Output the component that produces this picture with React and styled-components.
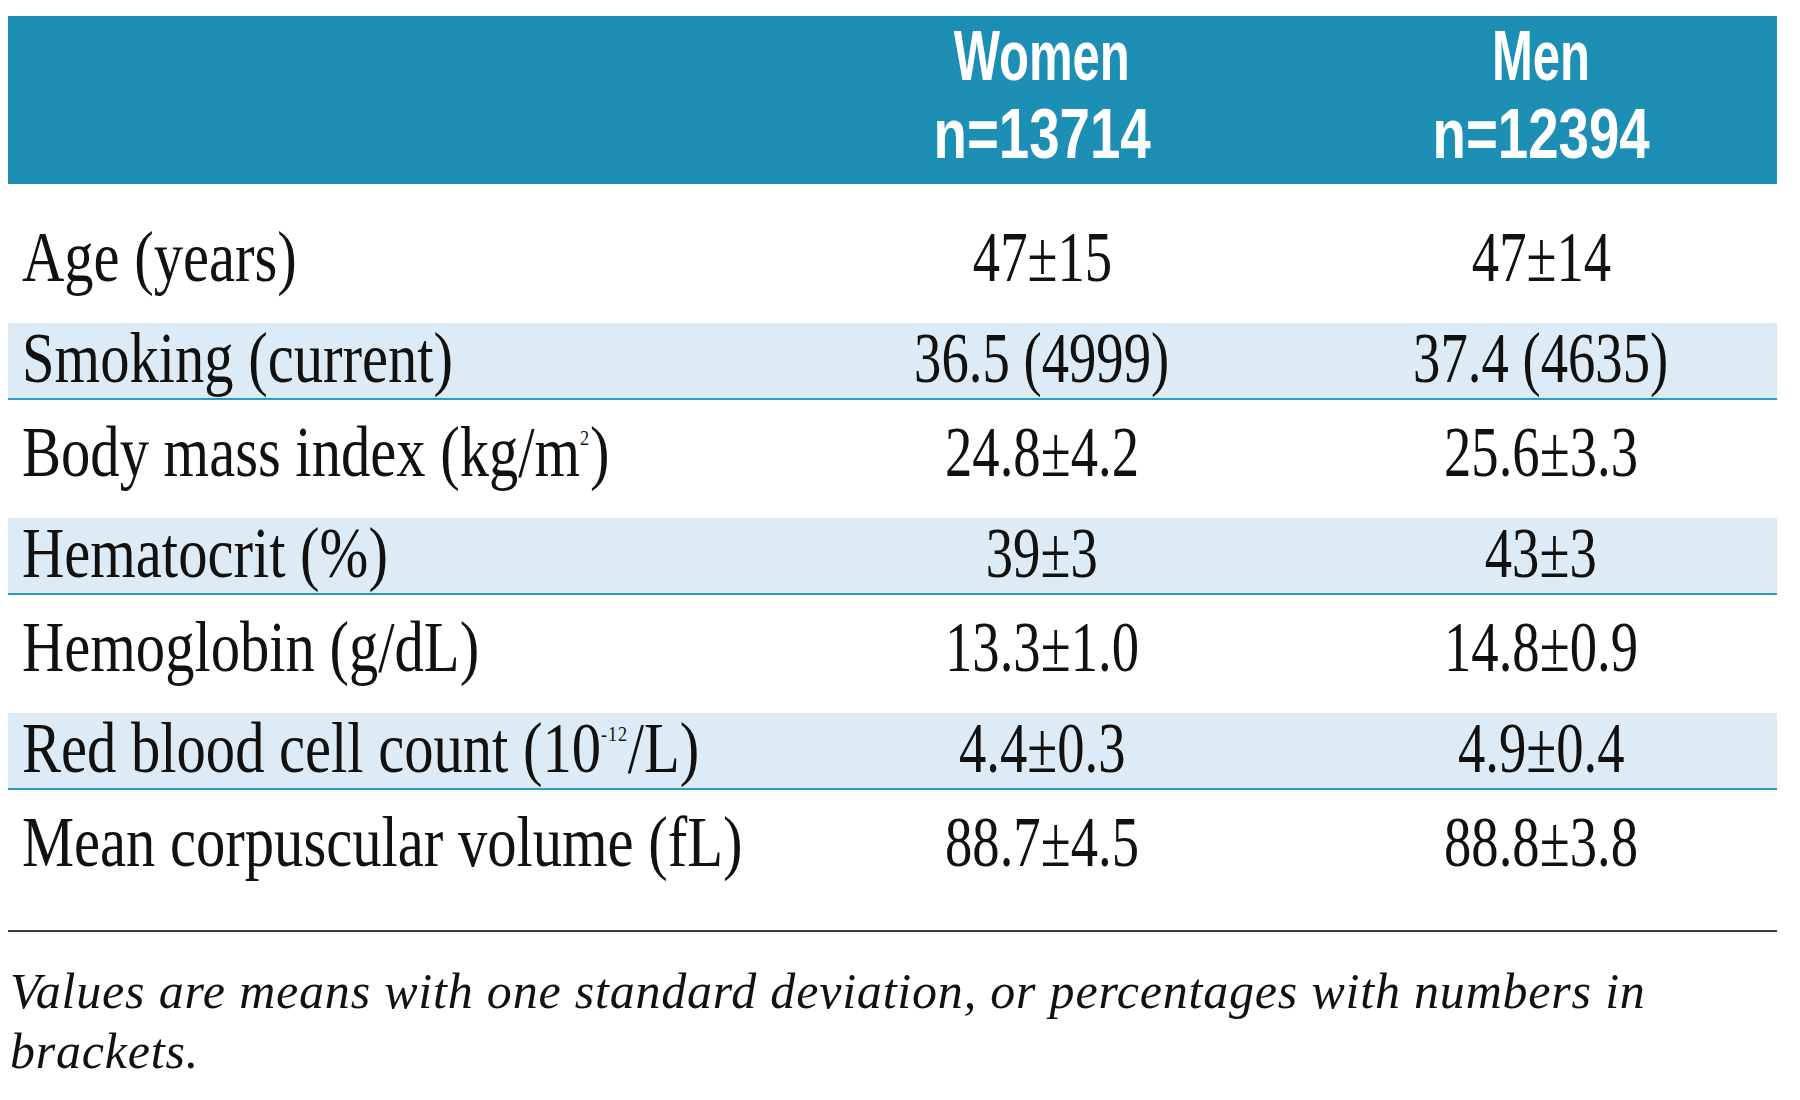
import React from "react";
import styled, { createGlobalStyle } from "styled-components";

const GlobalStyle = createGlobalStyle`
  html, body {
    margin: 0;
    padding: 0;
    background: #ffffff;
  }
  body {
    font-family: "Liberation Serif", "Times New Roman", serif;
    color: #111111;
  }
`;

const COLS = "771px 526px 472px";

const rows = [
  { label: "Age (years)", women: "47±15", men: "47±14" },
  { label: "Smoking (current)", women: "36.5 (4999)", men: "37.4 (4635)", shaded: true },
  {
    label: (
      <>
        Body mass index (kg/m<Sup>2</Sup>)
      </>
    ),
    women: "24.8±4.2",
    men: "25.6±3.3",
  },
  { label: "Hematocrit (%)", women: "39±3", men: "43±3", shaded: true },
  { label: "Hemoglobin (g/dL)", women: "13.3±1.0", men: "14.8±0.9" },
  {
    label: (
      <>
        Red blood cell count (10<Sup>-12</Sup>/L)
      </>
    ),
    women: "4.4±0.3",
    men: "4.9±0.4",
    shaded: true,
  },
  { label: "Mean corpuscular volume (fL)", women: "88.7±4.5", men: "88.8±3.8" },
];

function Sup({ children }) {
  return <SupText>{children}</SupText>;
}

const App = () => {
  return (
    <>
      <GlobalStyle />
      <Page>
        <HeaderRow>
          <div />
          <HeadCell>
            <HeadLine $scale={0.7}>Women</HeadLine>
            <HeadLine $scale={0.78}>n=13714</HeadLine>
          </HeadCell>
          <HeadCell>
            <HeadLine $scale={0.7}>Men</HeadLine>
            <HeadLine $scale={0.78}>n=12394</HeadLine>
          </HeadCell>
        </HeaderRow>
        <Body>
          {rows.map((row, index) => (
            <Row key={index} $shaded={row.shaded}>
              <LabelCell>
                <Squeezed $origin="left" $scale={0.825}>
                  {row.label}
                </Squeezed>
              </LabelCell>
              <ValueCell>
                <Squeezed $scale={0.77}>{row.women}</Squeezed>
              </ValueCell>
              <ValueCell>
                <Squeezed $scale={0.77}>{row.men}</Squeezed>
              </ValueCell>
            </Row>
          ))}
        </Body>
        <Rule />
        <Footnote>
          Values are means with one standard deviation, or percentages with
          numbers in brackets.
        </Footnote>
      </Page>
    </>
  );
};

const Page = styled.div`
  padding: 16px 0 0 8px;
  width: 1769px;
`;

const HeaderRow = styled.div`
  display: grid;
  grid-template-columns: ${COLS};
  height: 168px;
  background: #1e8fb4;
`;

const HeadCell = styled.div`
  display: flex;
  flex-direction: column;
  align-items: center;
  padding-top: 1px;
  font-family: "Liberation Sans", Arial, sans-serif;
  font-weight: 700;
  font-size: 70px;
  line-height: 78px;
  color: #ffffff;
`;

const HeadLine = styled.span`
  display: block;
  white-space: nowrap;
  transform: scaleX(${(p) => p.$scale});
`;

const Body = styled.div`
  padding-top: 21px;
`;

const Row = styled.div`
  display: grid;
  grid-template-columns: ${COLS};
  align-items: center;
  box-sizing: border-box;
  height: ${(p) => (p.$shaded ? 77 : 118)}px;
  padding-bottom: 13px;
  background: ${(p) => (p.$shaded ? "#dcebf5" : "transparent")};
  border-bottom: ${(p) => (p.$shaded ? "2px solid #2b9ac5" : "none")};
  font-size: 71px;
  line-height: 71px;
`;

const LabelCell = styled.div`
  padding-left: 14px;
  white-space: nowrap;
`;

const ValueCell = styled.div`
  display: flex;
  justify-content: center;
  white-space: nowrap;
`;

const Squeezed = styled.span`
  display: inline-block;
  transform: scaleX(${(p) => p.$scale});
  transform-origin: ${(p) => p.$origin || "center"};
`;

const SupText = styled.span`
  font-size: 22px;
  line-height: 0;
  vertical-align: 31px;
  letter-spacing: 1px;
`;

const Rule = styled.div`
  margin-top: 22px;
  height: 2px;
  background: #3c3c3c;
`;

const Footnote = styled.p`
  margin: 29px 0 0 0;
  padding-left: 2px;
  font-style: italic;
  font-size: 50px;
  line-height: 60px;
  letter-spacing: 0.8px;
  color: #111111;
`;

export default App;
